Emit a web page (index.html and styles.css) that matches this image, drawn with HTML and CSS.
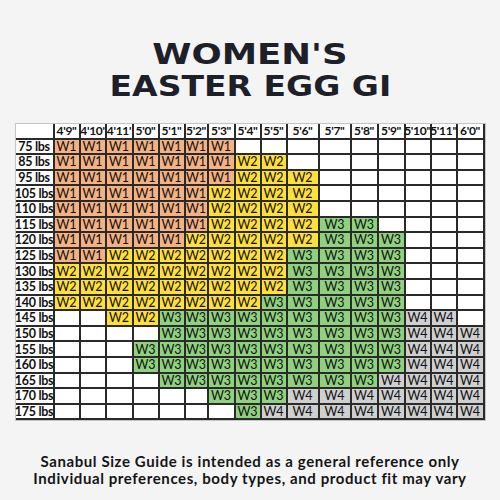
FILE: index.html
```html
<!DOCTYPE html>
<html lang="en">

<head>
    <meta charset="UTF-8">
    <meta name="viewport" content="width=device-width, initial-scale=1.0">
    <title>Women's Easter Egg Gi - Size Chart</title>
    <link rel="stylesheet" href="styles.css">
</head>

<body>
    <h1 class="title"><span class="line-1">WOMEN'S</span><br><span class="line-2">EASTER EGG GI</span></h1>

    <div class="chart">
        <!-- header -->
        <span class="corner"></span>
        <span class="hd">4'9"</span><span class="hd">4'10'</span><span class="hd">4'11'</span><span class="hd">5'0"</span>
        <span class="hd">5'1"</span><span class="hd">5'2"</span><span class="hd">5'3"</span><span class="hd">5'4"</span>
        <span class="hd">5'5"</span><span class="hd">5'6"</span><span class="hd">5'7"</span><span class="hd">5'8"</span>
        <span class="hd">5'9"</span><span class="hd">5'10"</span><span class="hd">5'11"</span><span class="hd">6'0"</span>

        <span class="wt">75 lbs</span>
        <span class="w1">W1</span><span class="w1">W1</span><span class="w1">W1</span><span class="w1">W1</span><span class="w1">W1</span><span class="w1">W1</span><span class="w1">W1</span>
        <span></span><span></span><span></span><span></span><span></span><span></span><span></span><span></span><span></span>

        <span class="wt">85 lbs</span>
        <span class="w1">W1</span><span class="w1">W1</span><span class="w1">W1</span><span class="w1">W1</span><span class="w1">W1</span><span class="w1">W1</span><span class="w1">W1</span>
        <span class="w2">W2</span><span class="w2">W2</span>
        <span></span><span></span><span></span><span></span><span></span><span></span><span></span>

        <span class="wt">95 lbs</span>
        <span class="w1">W1</span><span class="w1">W1</span><span class="w1">W1</span><span class="w1">W1</span><span class="w1">W1</span><span class="w1">W1</span><span class="w1">W1</span>
        <span class="w2">W2</span><span class="w2">W2</span><span class="w2">W2</span>
        <span></span><span></span><span></span><span></span><span></span><span></span>

        <span class="wt">105 lbs</span>
        <span class="w1">W1</span><span class="w1">W1</span><span class="w1">W1</span><span class="w1">W1</span><span class="w1">W1</span><span class="w1">W1</span>
        <span class="w2">W2</span><span class="w2">W2</span><span class="w2">W2</span><span class="w2">W2</span>
        <span></span><span></span><span></span><span></span><span></span><span></span>

        <span class="wt">110 lbs</span>
        <span class="w1">W1</span><span class="w1">W1</span><span class="w1">W1</span><span class="w1">W1</span><span class="w1">W1</span><span class="w1">W1</span>
        <span class="w2">W2</span><span class="w2">W2</span><span class="w2">W2</span><span class="w2">W2</span>
        <span></span><span></span><span></span><span></span><span></span><span></span>

        <span class="wt">115 lbs</span>
        <span class="w1">W1</span><span class="w1">W1</span><span class="w1">W1</span><span class="w1">W1</span><span class="w1">W1</span><span class="w1">W1</span>
        <span class="w2">W2</span><span class="w2">W2</span><span class="w2">W2</span><span class="w2">W2</span>
        <span class="w3">W3</span><span class="w3">W3</span>
        <span></span><span></span><span></span><span></span>

        <span class="wt">120 lbs</span>
        <span class="w1">W1</span><span class="w1">W1</span><span class="w1">W1</span><span class="w1">W1</span><span class="w1">W1</span>
        <span class="w2">W2</span><span class="w2">W2</span><span class="w2">W2</span><span class="w2">W2</span><span class="w2">W2</span>
        <span class="w3">W3</span><span class="w3">W3</span><span class="w3">W3</span>
        <span></span><span></span><span></span>

        <span class="wt">125 lbs</span>
        <span class="w1">W1</span><span class="w1">W1</span>
        <span class="w2">W2</span><span class="w2">W2</span><span class="w2">W2</span><span class="w2">W2</span><span class="w2">W2</span><span class="w2">W2</span><span class="w2">W2</span>
        <span class="w3">W3</span><span class="w3">W3</span><span class="w3">W3</span><span class="w3">W3</span>
        <span></span><span></span><span></span>

        <span class="wt">130 lbs</span>
        <span class="w2">W2</span><span class="w2">W2</span><span class="w2">W2</span><span class="w2">W2</span><span class="w2">W2</span><span class="w2">W2</span><span class="w2">W2</span><span class="w2">W2</span><span class="w2">W2</span>
        <span class="w3">W3</span><span class="w3">W3</span><span class="w3">W3</span><span class="w3">W3</span>
        <span></span><span></span><span></span>

        <span class="wt">135 lbs</span>
        <span class="w2">W2</span><span class="w2">W2</span><span class="w2">W2</span><span class="w2">W2</span><span class="w2">W2</span><span class="w2">W2</span><span class="w2">W2</span><span class="w2">W2</span><span class="w2">W2</span>
        <span class="w3">W3</span><span class="w3">W3</span><span class="w3">W3</span><span class="w3">W3</span>
        <span></span><span></span><span></span>

        <span class="wt">140 lbs</span>
        <span class="w2">W2</span><span class="w2">W2</span><span class="w2">W2</span><span class="w2">W2</span><span class="w2">W2</span><span class="w2">W2</span><span class="w2">W2</span><span class="w2">W2</span>
        <span class="w3">W3</span><span class="w3">W3</span><span class="w3">W3</span><span class="w3">W3</span><span class="w3">W3</span>
        <span></span><span></span><span></span>

        <span class="wt">145 lbs</span>
        <span></span><span></span>
        <span class="w2">W2</span><span class="w2">W2</span>
        <span class="w3">W3</span><span class="w3">W3</span><span class="w3">W3</span><span class="w3">W3</span><span class="w3">W3</span><span class="w3">W3</span><span class="w3">W3</span><span class="w3">W3</span><span class="w3">W3</span>
        <span class="w4">W4</span><span class="w4">W4</span>
        <span></span>

        <span class="wt">150 lbs</span>
        <span></span><span></span><span></span><span></span>
        <span class="w3">W3</span><span class="w3">W3</span><span class="w3">W3</span><span class="w3">W3</span><span class="w3">W3</span><span class="w3">W3</span><span class="w3">W3</span><span class="w3">W3</span><span class="w3">W3</span>
        <span class="w4">W4</span><span class="w4">W4</span><span class="w4">W4</span>

        <span class="wt">155 lbs</span>
        <span></span><span></span><span></span>
        <span class="w3">W3</span><span class="w3">W3</span><span class="w3">W3</span><span class="w3">W3</span><span class="w3">W3</span><span class="w3">W3</span><span class="w3">W3</span><span class="w3">W3</span><span class="w3">W3</span><span class="w3">W3</span>
        <span class="w4">W4</span><span class="w4">W4</span><span class="w4">W4</span>

        <span class="wt">160 lbs</span>
        <span></span><span></span><span></span>
        <span class="w3">W3</span><span class="w3">W3</span><span class="w3">W3</span><span class="w3">W3</span><span class="w3">W3</span><span class="w3">W3</span><span class="w3">W3</span><span class="w3">W3</span><span class="w3">W3</span><span class="w3">W3</span>
        <span class="w4">W4</span><span class="w4">W4</span><span class="w4">W4</span>

        <span class="wt">165 lbs</span>
        <span></span><span></span><span></span><span></span>
        <span class="w3">W3</span><span class="w3">W3</span><span class="w3">W3</span><span class="w3">W3</span><span class="w3">W3</span><span class="w3">W3</span><span class="w3">W3</span><span class="w3">W3</span>
        <span class="w4">W4</span><span class="w4">W4</span><span class="w4">W4</span><span class="w4">W4</span>

        <span class="wt">170 lbs</span>
        <span></span><span></span><span></span><span></span><span></span><span></span>
        <span class="w3">W3</span><span class="w3">W3</span><span class="w3">W3</span>
        <span class="w4">W4</span><span class="w4">W4</span><span class="w4">W4</span><span class="w4">W4</span><span class="w4">W4</span><span class="w4">W4</span><span class="w4">W4</span>

        <span class="wt">175 lbs</span>
        <span></span><span></span><span></span><span></span><span></span><span></span><span></span>
        <span class="w3">W3</span>
        <span class="w4">W4</span><span class="w4">W4</span><span class="w4">W4</span><span class="w4">W4</span><span class="w4">W4</span><span class="w4">W4</span><span class="w4">W4</span><span class="w4">W4</span>
    </div>

    <p class="note">Sanabul Size Guide is intended as a general reference only<br>
        Individual preferences, body types, and product fit may vary</p>
</body>

</html>
```

FILE: styles.css
```css
body {
    margin: 0;
    padding-top: 39px;
    background-color: #f4f4f4;
    color: #1e2029;
}

.title {
    margin: 0 0 20px;
    font-family: 'DejaVu Sans', sans-serif;
    font-size: 28px;
    font-weight: bold;
    line-height: 32px;
    text-align: center;
}

.title span {
    display: inline-block;
}

.title .line-1 {
    transform: scaleX(1.27);
}

.title .line-2 {
    transform: scaleX(1.18);
}

.chart {
    display: grid;
    grid-template-columns: 39px 26px 26px 27px 26px 26px 23px 27px 26px 26px 32px 32px 27px 27px 26px 26px 27px;
    grid-auto-rows: 15.6px;
    width: max-content;
    margin: 0 auto;
    background-color: #fff;
    border: 1px solid #c4c4c4;
    font-family: 'Lato', 'Liberation Sans', sans-serif;
    font-size: 12.5px;
    color: #111;
}

.chart span {
    display: flex;
    align-items: center;
    justify-content: center;
    box-sizing: border-box;
    border-right: 2px solid #2a2a2a;
    border-bottom: 2px solid #2a2a2a;
    white-space: nowrap;
}

.chart .hd {
    font-size: 12px;
    font-weight: bold;
    letter-spacing: -0.3px;
}

.chart .wt {
    font-weight: bold;
    font-size: 12.5px;
    letter-spacing: -0.3px;
}

.chart .w1 {
    background-color: #f4b183;
}

.chart .w2 {
    background-color: #ffdf3a;
}

.chart .w3 {
    background-color: #8fd17e;
}

.chart .w4 {
    background-color: #cfcfcf;
}

.note {
    margin: 32px 0 0;
    font-family: 'Lato', sans-serif;
    font-size: 15px;
    font-weight: bold;
    line-height: 17px;
    letter-spacing: 0.6px;
    text-align: center;
    color: #151515;
}
```
